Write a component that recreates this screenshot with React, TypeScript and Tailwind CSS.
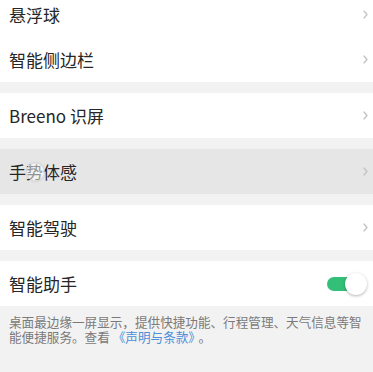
import React from "react";

const Chevron = () => (
  <svg width="5" height="9" viewBox="0 0 5 9" fill="none">
    <path d="M1 1l3 3.5L1 8" stroke="#c2c2c2" strokeWidth="1.2" strokeLinecap="round" strokeLinejoin="round" />
  </svg>
);

function Row({ label, pressed, children }: { label: React.ReactNode; pressed?: boolean; children?: React.ReactNode }) {
  return (
    <div className={`relative flex h-[45px] items-center justify-between pl-[9px] pr-[5px] ${pressed ? "bg-[#e6e6e6]" : "bg-white"}`}>
      <span className="text-[17px] leading-none text-[#262626]">{label}</span>
      {children ?? <Chevron />}
    </div>
  );
}

const Gap = () => <div className="h-[11px] bg-[#f2f2f2]" />;

export default function App() {
  return (
    <div
      className="h-[372px] w-[373px] overflow-hidden bg-[#f2f2f2]"
      style={{ fontFamily: '"Noto Sans CJK SC", "Noto Sans", sans-serif' }}
    >
      <div className="-mt-[8px]">
        <Row label="悬浮球" />
        <Row label="智能侧边栏" />
        <Gap />
        <Row label="Breeno 识屏" />
        <Gap />
        <Row
          pressed
          label={
            <span className="relative">
              手势体感
              <span className="absolute left-[17px] top-1/2 h-[19px] w-[19px] -translate-y-1/2 rounded-full border border-[#d0d0d0]/70 bg-white/50 shadow-[0_0_2px_rgba(0,0,0,0.15)]" />
            </span>
          }
        />
        <Gap />
        <Row label="智能驾驶" />
        <Gap />
        <Row label="智能助手">
          <div className="relative mr-[1px] flex h-[22px] w-[44px] items-center">
            <div className="ml-[4px] h-[14px] w-[34px] rounded-full bg-[#33bf78]" />
            <div className="absolute right-0 top-0 h-[22px] w-[22px] rounded-full bg-white shadow-[0_1px_3px_rgba(0,0,0,0.3)]" />
          </div>
        </Row>
        <p className="pl-[9px] pr-[2px] pt-[8px] text-[12.6px] leading-[15px] text-[#7a7a7a]">
          桌面最边缘一屏显示，提供快捷功能、行程管理、天气信息等智能便捷服务。查看<span className="ml-[3px] mr-[4px] text-[#4a8fd8]">《声明与条款》</span>。
        </p>
      </div>
    </div>
  );
}
